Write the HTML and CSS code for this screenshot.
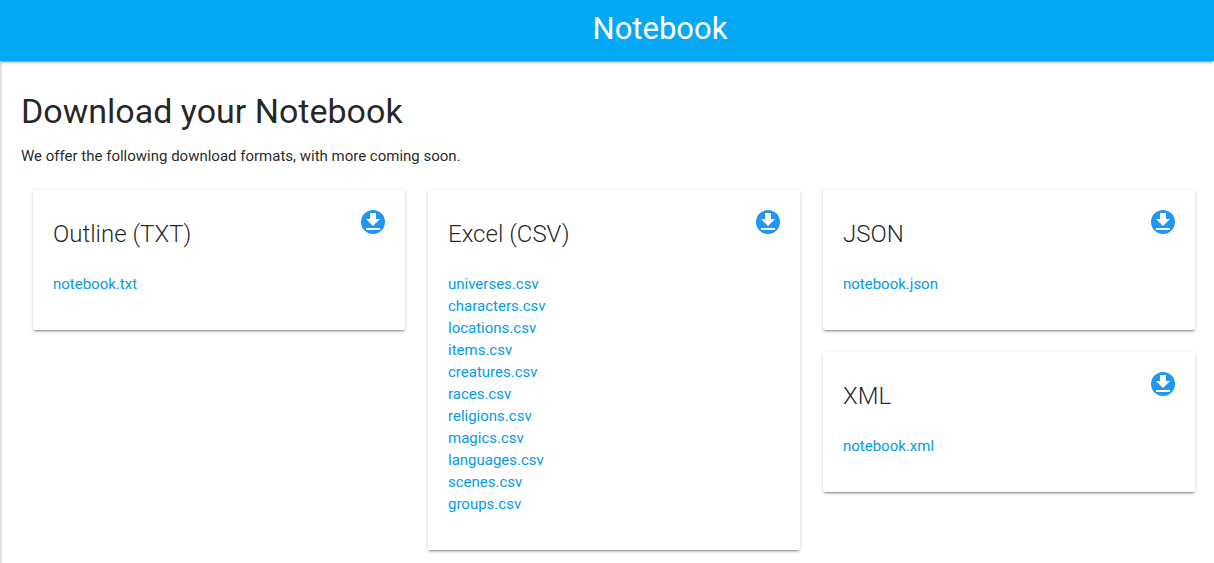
FILE: index.html
```html
<!DOCTYPE html>
<html lang="en">
<head>
    <meta charset="UTF-8">
    <meta name="viewport" content="width=device-width, initial-scale=1.0">
    <title>Notebook</title>
    <link rel="stylesheet" href="styles.css">
</head>
<body>
    <nav class="navbar">
        <a class="logo" href="#">Notebook</a>
    </nav>
    <main class="content">
        <h1>Download your Notebook</h1>
        <p class="intro">We offer the following download formats, with more coming soon.</p>
        <div class="row">
            <div class="col">
                <section class="card">
                    <svg class="icon" viewBox="0 0 24 24" aria-hidden="true">
                        <circle cx="12" cy="12" r="12"/>
                        <path d="M19 9h-4V3H9v6H5l7 7 7-7zM5 18v2h14v-2H5z"/>
                    </svg>
                    <h2>Outline (TXT)</h2>
                    <ul class="files">
                        <li><a href="#">notebook.txt</a></li>
                    </ul>
                </section>
            </div>
            <div class="col">
                <section class="card">
                    <svg class="icon" viewBox="0 0 24 24" aria-hidden="true">
                        <circle cx="12" cy="12" r="12"/>
                        <path d="M19 9h-4V3H9v6H5l7 7 7-7zM5 18v2h14v-2H5z"/>
                    </svg>
                    <h2>Excel (CSV)</h2>
                    <ul class="files">
                        <li><a href="#">universes.csv</a></li>
                        <li><a href="#">characters.csv</a></li>
                        <li><a href="#">locations.csv</a></li>
                        <li><a href="#">items.csv</a></li>
                        <li><a href="#">creatures.csv</a></li>
                        <li><a href="#">races.csv</a></li>
                        <li><a href="#">religions.csv</a></li>
                        <li><a href="#">magics.csv</a></li>
                        <li><a href="#">languages.csv</a></li>
                        <li><a href="#">scenes.csv</a></li>
                        <li><a href="#">groups.csv</a></li>
                    </ul>
                </section>
            </div>
            <div class="col">
                <section class="card">
                    <svg class="icon" viewBox="0 0 24 24" aria-hidden="true">
                        <circle cx="12" cy="12" r="12"/>
                        <path d="M19 9h-4V3H9v6H5l7 7 7-7zM5 18v2h14v-2H5z"/>
                    </svg>
                    <h2>JSON</h2>
                    <ul class="files">
                        <li><a href="#">notebook.json</a></li>
                    </ul>
                </section>
                <section class="card">
                    <svg class="icon" viewBox="0 0 24 24" aria-hidden="true">
                        <circle cx="12" cy="12" r="12"/>
                        <path d="M19 9h-4V3H9v6H5l7 7 7-7zM5 18v2h14v-2H5z"/>
                    </svg>
                    <h2>XML</h2>
                    <ul class="files">
                        <li><a href="#">notebook.xml</a></li>
                    </ul>
                </section>
            </div>
        </div>
    </main>
</body>
</html>
```

FILE: styles.css
```css
* {
    box-sizing: border-box;
}
body {
    margin: 0;
    min-height: 100vh;
    display: flex;
    flex-direction: column;
    font-family: Roboto, sans-serif;
    font-size: 15px;
    line-height: 22px;
    color: rgba(0, 0, 0, 0.87);
    background-color: #fff;
}
a {
    color: #039be5;
    text-decoration: none;
}
.navbar {
    position: relative;
    height: 61px;
    padding-left: 106px;
    text-align: center;
    background-color: #03a9f4;
    box-shadow: 0 2px 2px 0 rgba(0, 0, 0, 0.14), 0 1px 5px 0 rgba(0, 0, 0, 0.12), 0 3px 1px -2px rgba(0, 0, 0, 0.2);
}
.logo {
    font-size: 31px;
    line-height: 58px;
    color: #fff;
}
.content {
    flex: 1;
    padding: 30px 7px 0 21px;
    box-shadow: inset 3px 0 3px -2px rgba(0, 0, 0, 0.2);
}
h1 {
    margin: 0 0 14px;
    font-size: 34px;
    font-weight: 400;
    line-height: 40px;
}
.intro {
    margin: 0 0 23px;
}
.row {
    display: flex;
    gap: 23px;
    padding: 0 12px;
}
.col {
    flex: 1;
}
.card {
    margin-bottom: 22px;
    padding: 20px 20px 35px;
    border-radius: 2px;
    background-color: #fff;
    box-shadow: 0 2px 2px 0 rgba(0, 0, 0, 0.14), 0 1px 5px 0 rgba(0, 0, 0, 0.12), 0 3px 1px -2px rgba(0, 0, 0, 0.2);
}
.icon {
    float: right;
    width: 24px;
    height: 24px;
    fill: #2196f3;
}
.icon path {
    fill: #fff;
}
h2 {
    margin: 0 0 23px;
    padding-top: 8px;
    font-size: 24px;
    font-weight: 300;
    line-height: 32px;
}
.files {
    margin: 0;
    padding: 0;
    list-style: none;
}
```
